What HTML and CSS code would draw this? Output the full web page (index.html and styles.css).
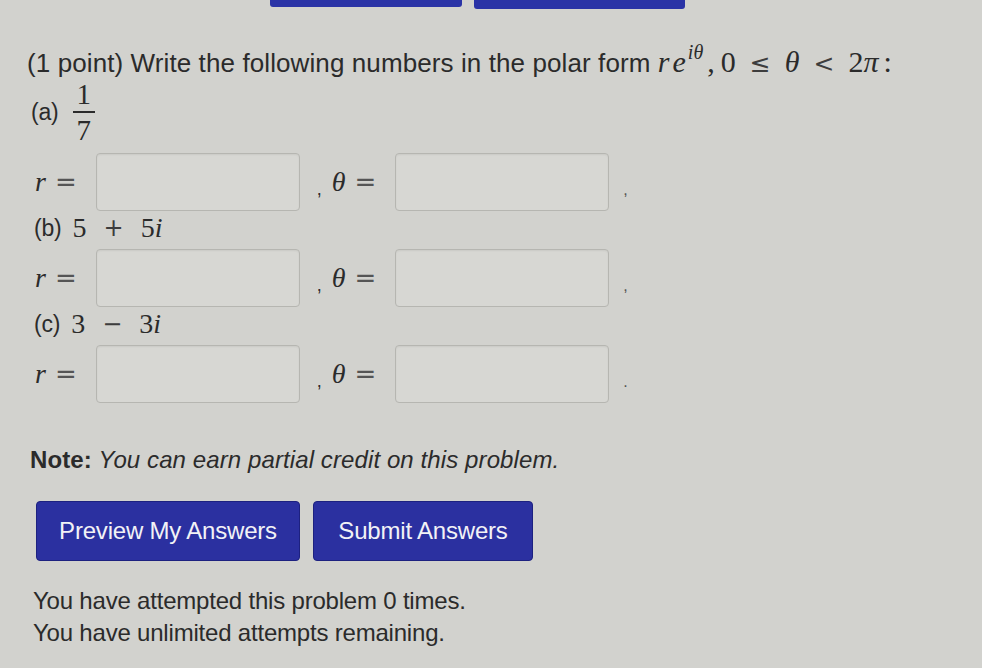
FILE: index.html
```html
<!DOCTYPE html>
<html>
<head>
<meta charset="utf-8">
<link rel="stylesheet" href="styles.css">
</head>
<body>
<div class="topbars"><div class="bar bar1"></div><div class="bar bar2"></div></div>
<main class="problem">
  <p class="title">(1 point) Write the following numbers in the polar form <span class="tm"><span class="m mi r">r</span><span class="m mi">e</span><sup class="m mi sup">iθ</sup><span class="m comma">,</span><span class="m">0</span><span class="op">≤</span><span class="m mi">θ</span><span class="op">&lt;</span><span class="m">2</span><span class="m mi">π</span><span class="m colon">:</span></span></p>

  <div class="part part-a"><span class="plabel">(a)</span><span class="frac"><span class="num">1</span><span class="den">7</span></span></div>
  <div class="row">
    <span class="m mi lab">r</span><span class="op eq">=</span><span class="box box1"></span>
    <span class="sep">,</span><span class="m mi lab">θ</span><span class="op eq">=</span><span class="box box2"></span><span class="punct">,</span>
  </div>

  <div class="part"><span class="plabel">(b)</span><span class="m">5</span><span class="op">+</span><span class="m">5</span><span class="m mi">i</span></div>
  <div class="row">
    <span class="m mi lab">r</span><span class="op eq">=</span><span class="box box1"></span>
    <span class="sep">,</span><span class="m mi lab">θ</span><span class="op eq">=</span><span class="box box2"></span><span class="punct">,</span>
  </div>

  <div class="part"><span class="plabel">(c)</span><span class="m">3</span><span class="op">−</span><span class="m">3</span><span class="m mi">i</span></div>
  <div class="row">
    <span class="m mi lab">r</span><span class="op eq">=</span><span class="box box1"></span>
    <span class="sep">,</span><span class="m mi lab">θ</span><span class="op eq">=</span><span class="box box2"></span><span class="punct">.</span>
  </div>

  <p class="note"><b>Note:</b> <i>You can earn partial credit on this problem.</i></p>

  <div class="buttons">
    <button class="btn btn-preview">Preview My Answers</button>
    <button class="btn btn-submit">Submit Answers</button>
  </div>

  <p class="attempts">You have attempted this problem 0 times.<br>You have unlimited attempts remaining.</p>
</main>
</body>
</html>
```

FILE: styles.css
```css
html, body {
  margin: 0;
  padding: 0;
  background: #d2d2ce;
}
body {
  font-family: "Liberation Sans", Arial, sans-serif;
  color: #2b2b2b;
  width: 982px;
  height: 668px;
  overflow: hidden;
}
.topbars {
  display: flex;
  gap: 12px;
  padding-left: 270px;
}
.bar {
  background: #2a33a6;
  border-radius: 0 0 3px 3px;
}
.bar1 { width: 192px; height: 7px; }
.bar2 { width: 211px; height: 9px; }

.problem {
  padding-left: 27px;
}
.title {
  margin: 36px 0 0 0;
  font-size: 26px;
  letter-spacing: 0.1px;
  line-height: 34px;
  white-space: nowrap;
}
.m {
  font-family: "Liberation Serif", "DejaVu Serif", serif;
  font-size: 28px;
  letter-spacing: 0;
}
.mi { font-style: italic; }
.op {
  font-family: "DejaVu Sans", sans-serif;
  font-size: 25px;
  color: #3d3d3d;
  letter-spacing: 0;
}

.tm .m { font-size: 30px; }
.tm .r { margin-right: 3px; }
.tm .sup {
  font-size: 20px;
  vertical-align: 13px;
  line-height: 0;
  margin-left: 2px;
}
.tm .comma { margin-left: 4px; margin-right: 6px; }
.tm .op { margin: 0 14px; }
.tm .colon { margin-left: 5px; }

.part {
  display: flex;
  align-items: center;
  height: 30px;
  margin-left: 7px;
}
.part .plabel {
  font-size: 23px;
  letter-spacing: -0.2px;
  margin-right: 11px;
}
.part .m { font-size: 28px; }
.part .op { margin: 0 17px; font-size: 24px; }
.part-a {
  height: 70px;
  margin-left: 4px;
  margin-top: -4px;
}
.part-a .plabel { margin-right: 14px; }
.frac {
  display: inline-flex;
  flex-direction: column;
  align-items: center;
  font-family: "Liberation Serif", "DejaVu Serif", serif;
  font-size: 29px;
  line-height: 30px;
}
.frac .num {
  border-bottom: 2px solid #2b2b2b;
  padding: 0 4px 2px;
}
.frac .den { padding-top: 2px; }

.row {
  display: flex;
  align-items: center;
  margin: 6px 0 2px 8px;
}
.row .lab { font-size: 28px; }
.row .eq {
  margin-left: 9px;
  margin-right: 19px;
  font-size: 26px;
  color: #555;
}
.box {
  display: block;
  height: 56px;
  border: 1px solid #b6b6b1;
  border-radius: 4px;
  background: #d7d7d3;
  box-shadow: inset 0 1px 2px rgba(0,0,0,0.06);
}
.box1 { width: 202px; }
.box2 { width: 212px; }
.sep {
  font-size: 18px;
  margin: 14px 10px 0 17px;
}
.punct {
  font-size: 16px;
  margin: 16px 0 0 14px;
  color: #555;
}

.note {
  margin: 42px 0 0 3px;
  font-size: 24px;
  letter-spacing: 0.1px;
  line-height: 30px;
}
.note b { font-weight: bold; }

.buttons {
  display: flex;
  gap: 13px;
  margin: 26px 0 0 9px;
}
.btn {
  font-family: "Liberation Sans", Arial, sans-serif;
  font-size: 24px;
  letter-spacing: -0.2px;
  color: #f2f2f6;
  background: #2b30a0;
  border: 1px solid #1d2180;
  border-radius: 4px;
  height: 60px;
  padding: 0;
}
.btn-preview { width: 264px; }
.btn-submit { width: 220px; }

.attempts {
  margin: 24px 0 0 6px;
  font-size: 24px;
  letter-spacing: -0.2px;
  line-height: 32px;
}
```
